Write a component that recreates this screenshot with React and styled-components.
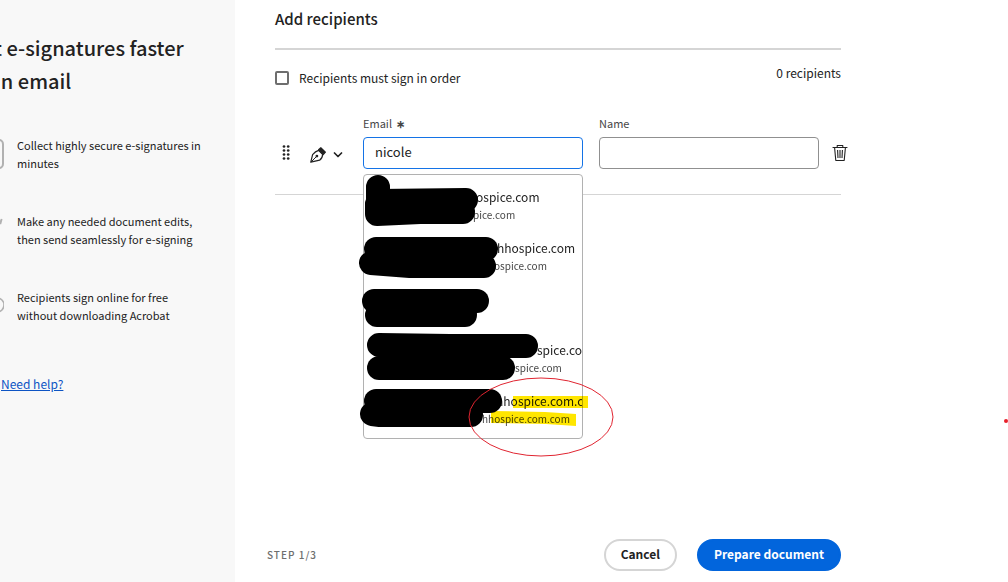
import React, { useState } from 'react'
import styled, { createGlobalStyle } from 'styled-components'


const GlobalStyle = createGlobalStyle`
  * {
    box-sizing: border-box;
  }

  body {
    margin: 0;
    background: #ffffff;
    color: #222222;
    font-family: 'Noto Sans CJK JP', 'Noto Sans', sans-serif;
    font-size: 12px;
    line-height: 18px;
  }

  button, input {
    font-family: inherit;
  }
`

const Page = styled.div`
  display: flex;
  min-height: 100vh;
  position: relative;
  overflow: hidden;
`

const Sidebar = styled.aside`
  flex: 0 0 266px;
  min-width: 0;
  margin-left: -31px;
  padding: 31px 32px 0 0;
  background: #f8f8f8;
`

const Headline = styled.h1`
  margin: 0 0 39px;
  font-size: 20px;
  line-height: 33px;
  font-weight: 500;
  white-space: nowrap;
`

const Benefits = styled.ul`
  display: flex;
  flex-direction: column;
  gap: 40px;
  margin: 0 0 50px;
  padding: 0;
  list-style: none;
`

const Benefit = styled.li`
  display: flex;
  align-items: center;
  gap: 13px;
  padding-left: 11px;
  font-size: 11px;
  line-height: 18px;
  white-space: nowrap;

  svg {
    flex: none;
  }
`

const HelpLink = styled.a`
  margin-left: 32px;
  color: #0d54c4;
  font-size: 12px;
  line-height: 20px;
`

const Main = styled.main`
  flex: 1;
  display: flex;
  flex-direction: column;
  max-width: 606px;
  padding: 7px 0 11px 40px;
`

const Title = styled.h2`
  margin: 0;
  padding-bottom: 17px;
  border-bottom: 2px solid #d5d5d5;
  font-size: 15px;
  line-height: 24px;
  font-weight: 500;
`

const OptionsBar = styled.div`
  display: flex;
  justify-content: space-between;
  align-items: flex-start;
  padding-top: 14px;
`

const CheckLabel = styled.label`
  display: flex;
  align-items: center;
  gap: 10px;
  padding-top: 4px;
  font-size: 12px;
  line-height: 20px;
`

const Checkbox = styled.input`
  appearance: none;
  width: 14px;
  height: 14px;
  margin: 0;
  border: 2px solid #6e6e6e;
  border-radius: 2px;
  background: #ffffff;

  &:checked {
    background: #0265dc;
  }
`

const Count = styled.span`
  font-size: 12px;
  line-height: 18px;
`

const RecipientRow = styled.div`
  display: flex;
  align-items: flex-end;
  margin: 26px -8px 0 0;
  padding-bottom: 25px;
`

const Divider = styled.hr`
  width: 100%;
  margin: 0;
  border: 0;
  border-top: 1px solid #d5d5d5;
`

const IconButton = styled.button`
  display: flex;
  align-items: center;
  justify-content: center;
  flex: none;
  width: ${({ $width }) => $width}px;
  height: 32px;
  padding: 0;
  border: 0;
  background: transparent;
  color: #222222;
  cursor: pointer;
`

const RoleButton = styled(IconButton)`
  justify-content: flex-start;
  gap: 7px;
  padding: 4px 0 0 13px;
`

const Field = styled.div`
  flex: 1;
  position: relative;
  min-width: 0;
  margin-right: ${({ $gap }) => $gap}px;
`

const FieldLabel = styled.label`
  display: flex;
  gap: 4px;
  padding-bottom: 5px;
  color: #464646;
  font-size: 11px;
  line-height: 18px;
`

const Required = styled.span`
  font-weight: 700;
`

const TextInput = styled.input`
  display: block;
  width: 100%;
  height: 32px;
  padding: 0 11px 3px;
  border: 1px solid ${({ $active }) => ($active ? '#1473e6' : '#909090')};
  border-radius: 4px;
  background: #ffffff;
  color: #222222;
  font-size: 13px;
  line-height: 20px;
  outline: none;
`

const Popover = styled.div`
  position: absolute;
  top: calc(100% + 5px);
  left: 0;
  width: 100%;
  z-index: 2;
`

const Suggestions = styled.ul`
  margin: 0;
  padding: 4px 0;
  border: 1px solid #b1b1b1;
  border-radius: 4px;
  background: #ffffff;
  list-style: none;
  overflow: hidden;
`

const Suggestion = styled.li`
  height: 51px;
  padding-top: 9px;
  cursor: pointer;
`

const SuggestionLine = styled.div`
  padding-left: ${({ $lead }) => $lead}px;
  color: ${({ $small }) => ($small ? '#464646' : '#222222')};
  font-size: ${({ $small }) => ($small ? 10 : 12)}px;
  line-height: 18px;
  min-height: 18px;
  white-space: nowrap;
`

const Markup = styled.svg`
  position: absolute;
  top: -10px;
  left: -14px;
  pointer-events: none;

  .highlight {
    fill: #ffe600;
    mix-blend-mode: multiply;
  }
`

const RedDot = styled.span`
  position: absolute;
  top: 419px;
  right: 0;
  width: 4px;
  height: 4px;
  border-radius: 2px;
  background: #e8202a;
`

const Footer = styled.footer`
  display: flex;
  align-items: center;
  gap: 20px;
  margin: auto 0 0 -8px;
`

const Step = styled.span`
  flex: 1;
  color: #6e6e6e;
  font-size: 10px;
  font-weight: 500;
  letter-spacing: 1px;
`

const Button = styled.button`
  height: 32px;
  padding: 0 15px 2px;
  border: 2px solid ${({ $primary }) => ($primary ? '#0265dc' : '#d5d5d5')};
  border-radius: 16px;
  background: ${({ $primary }) => ($primary ? '#0265dc' : '#ffffff')};
  color: ${({ $primary }) => ($primary ? '#ffffff' : '#222222')};
  font-size: 12px;
  font-weight: 700;
  line-height: 20px;
  cursor: pointer;
`

const DocIcon = () => (
  <svg width="24" height="32" viewBox="0 0 24 32" fill="none" stroke="#b1b1b1" strokeWidth="2">
    <rect x="1" y="2" width="22" height="28" rx="4" />
  </svg>
)

const EditIcon = () => (
  <svg width="24" height="32" viewBox="0 0 24 32" fill="none" stroke="#b1b1b1" strokeWidth="1.5">
    <path d="M4 18L15 6M19.5 5l1 5 1.3-5" />
  </svg>
)

const GlobeIcon = () => (
  <svg width="24" height="32" viewBox="0 0 24 32" fill="none" stroke="#b1b1b1" strokeWidth="1.6">
    <circle cx="17" cy="15" r="7" />
  </svg>
)

const DragIcon = () => (
  <svg width="8" height="16" viewBox="0 0 8 16" fill="currentColor">
    {[1.5, 5.5, 9.5, 13.5].map((y) => (
      <g key={y}>
        <circle cx="2" cy={y} r="1.35" />
        <circle cx="6.2" cy={y} r="1.35" />
      </g>
    ))}
  </svg>
)

const PenIcon = () => (
  <svg width="16" height="16" viewBox="0 0 16 16" fill="none" stroke="currentColor" strokeWidth="1.2" strokeLinejoin="round">
    <path d="M.8 15.2l1.8-7.6Q5.4 4.4 8.6 3.4L12.6 7.4Q12.6 10.8 9.6 13.2z" />
    <path d="M.8 15.2l5.6-5.6" strokeWidth="1" />
    <circle cx="6.9" cy="9.1" r=".8" fill="currentColor" />
    <path d="M8.6 2.8l2.2-2 4.6 4.4-2.2 2.4z" fill="currentColor" />
  </svg>
)

const ChevronIcon = () => (
  <svg width="10" height="6" viewBox="0 0 10 6" fill="none" stroke="currentColor" strokeWidth="1.7" strokeLinecap="round" strokeLinejoin="round">
    <path d="M1.5 1L5 4.5 8.5 1" />
  </svg>
)

const TrashIcon = () => (
  <svg width="16" height="18" viewBox="0 0 16 18" fill="none" stroke="currentColor" strokeWidth="1.1" strokeLinejoin="round">
    <path d="M1 3.5h14" strokeLinecap="round" />
    <path d="M5.2 3.4V1.5h5.6v1.9" />
    <path d="M2.6 3.8l1.2 12.7h8.4l1.2-12.7" />
    <path d="M5.6 6l.4 8M8 6v8M10.4 6l-.4 8" />
  </svg>
)

const benefits = [
  { icon: <DocIcon />, lines: ['Collect highly secure e-signatures in', 'minutes'] },
  { icon: <EditIcon />, lines: ['Make any needed document edits,', 'then send seamlessly for e-signing'] },
  { icon: <GlobeIcon />, lines: ['Recipients sign online for free', 'without downloading Acrobat'] },
]

const suggestions = [
  { name: 'ospice.com', nameLead: 112, email: 'pice.com', emailLead: 109 },
  { name: 'hhospice.com', nameLead: 133, email: 'ospice.com', emailLead: 130 },
  { name: '', nameLead: 0, email: '', emailLead: 0 },
  { name: 'spice.co', nameLead: 173, email: 'spice.com', emailLead: 151 },
  { name: 'nhospice.com.c', nameLead: 132, email: 'hhospice.com.com', emailLead: 118 },
]

// marker strokes over the suggestion list
const strokes = [
  'M378 187V201L466 200',
  'M377 204V214L420 212H463',
  'M376 249H486',
  'M371 263L410 266H484',
  'M374 301H477',
  'M377 315H465',
  'M379 345L450 346H526',
  'M379 368H503',
  'M376 401H490',
  'M372 414L380 415H471',
]

const App = () => {
  const [email, setEmail] = useState('nicole')
  const [name, setName] = useState('')

  return (
    <>
      <GlobalStyle />
      <Page>
        <Sidebar>
          <Headline>Get e-signatures faster<br />than email</Headline>
          <Benefits>
            {benefits.map(({ icon, lines }) => (
              <Benefit key={lines[0]}>
                {icon}
                <span>{lines[0]}<br />{lines[1]}</span>
              </Benefit>
            ))}
          </Benefits>
          <HelpLink href="#help">Need help?</HelpLink>
        </Sidebar>

        <Main>
          <Title>Add recipients</Title>
          <OptionsBar>
            <CheckLabel>
              <Checkbox type="checkbox" />
              Recipients must sign in order
            </CheckLabel>
            <Count>0 recipients</Count>
          </OptionsBar>

          <RecipientRow>
            <IconButton type="button" $width={22} aria-label="Reorder recipient"><DragIcon /></IconButton>
            <RoleButton type="button" $width={66} aria-label="Recipient role">
              <PenIcon />
              <ChevronIcon />
            </RoleButton>
            <Field $gap={16}>
              <FieldLabel htmlFor="email">Email <Required>∗</Required></FieldLabel>
              <TextInput id="email" $active value={email} onChange={(e) => setEmail(e.target.value)} />
              <Popover>
                <Suggestions>
                  {suggestions.map((item, i) => (
                    <Suggestion key={i}>
                      <SuggestionLine $lead={item.nameLead}>{item.name}</SuggestionLine>
                      <SuggestionLine $small $lead={item.emailLead}>{item.email}</SuggestionLine>
                    </Suggestion>
                  ))}
                </Suggestions>
                <Markup width="280" height="300" viewBox="349 164 280 300" fill="none">
                  <path className="highlight" d="M513 396h75v12h-75z" />
                  <path className="highlight" d="M491 411l54 1 31 2v12l-30-2-55-1z" />
                  {strokes.map((d) => (
                    <path key={d} d={d} stroke="#000000" strokeWidth="24" strokeLinecap="round" strokeLinejoin="round" />
                  ))}
                  <ellipse cx="541" cy="417" rx="72" ry="39" stroke="#e02430" />
                </Markup>
              </Popover>
            </Field>
            <Field $gap={12}>
              <FieldLabel htmlFor="name">Name</FieldLabel>
              <TextInput id="name" value={name} onChange={(e) => setName(e.target.value)} />
            </Field>
            <IconButton type="button" $width={18} aria-label="Delete recipient"><TrashIcon /></IconButton>
          </RecipientRow>
          <Divider />

          <Footer>
            <Step>STEP 1/3</Step>
            <Button type="button">Cancel</Button>
            <Button type="button" $primary>Prepare document</Button>
          </Footer>
        </Main>
        <RedDot />
      </Page>
    </>
  )
}

export default App
